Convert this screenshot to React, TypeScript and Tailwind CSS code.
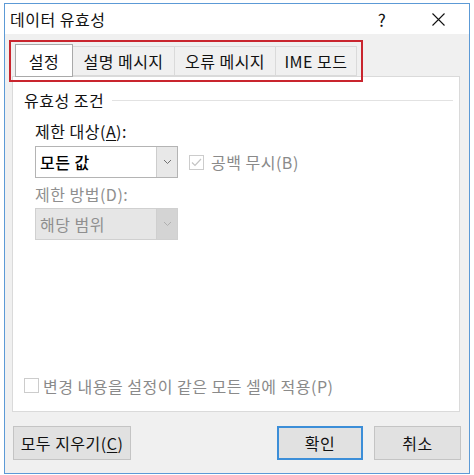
import React from 'react'

const Chevron = ({ color }: { color: string }) => (
  <svg width="9" height="6" viewBox="0 0 9 6" fill="none">
    <path d="M1 1l3.5 3.5L8 1" stroke={color} strokeWidth="1" />
  </svg>
)

const Tab = ({ label, active, width }: { label: string; active?: boolean; width: string }) =>
  active ? (
    <div
      className={`${width} h-[33px] bg-white border border-[#a9a9a9] flex items-center justify-center text-[16px] text-[#111]`}
    >
      {label}
    </div>
  ) : (
    <div
      className={`${width} h-[30px] mt-[2px] bg-[#f0f0f0] border border-[#dadada] border-l-0 flex items-center justify-center text-[16px] text-[#111]`}
    >
      {label}
    </div>
  )

const Select = ({ value, disabled }: { value: string; disabled?: boolean }) => (
  <div
    className={`w-[143px] h-[32px] flex border ${
      disabled ? 'border-[#d0d0d0] bg-[#e6e6e6]' : 'border-[#b4b4b4] bg-white'
    }`}
  >
    <div
      className={`flex-1 flex items-center pl-[4px] text-[16px] ${
        disabled ? 'text-[#8f8f8f]' : 'text-black font-medium'
      }`}
    >
      {value}
    </div>
    <div
      className={`w-[21px] flex items-center justify-center border-l ${
        disabled ? 'bg-[#d4d4d4] border-[#cfcfcf]' : 'bg-[#e8e8e8] border-[#cdcdcd]'
      }`}
    >
      <Chevron color={disabled ? '#b0b0b0' : '#707070'} />
    </div>
  </div>
)

const Button = ({ children, width, primary }: { children: React.ReactNode; width: string; primary?: boolean }) => (
  <div
    className={`${width} h-[34px] bg-[#e1e1e1] flex items-center justify-center text-[16px] text-[#111] ${
      primary ? 'border-2 border-[#3c8ed8]' : 'border border-[#c4c4c4]'
    }`}
  >
    {children}
  </div>
)

export default function App() {
  return (
    <div className="w-[474px] h-[475px] bg-white pt-[3px] pl-[4px] font-['Noto_Sans_CJK_KR','Noto_Sans',sans-serif] leading-none tracking-[0.5px]">
      <div className="w-[466px] h-[471px] border border-[#5c9ad6] bg-[#f0f0f0] flex flex-col">
        {/* title bar */}
        <div className="h-[30px] bg-white flex items-center pl-[5px] shrink-0">
          <span className="text-[16px] text-[#111]">데이터 유효성</span>
          <div className="flex-1" />
          <div className="w-[30px] flex justify-center text-[17px] text-[#111]">?</div>
          <div className="w-[26px]" />
          <div className="w-[30px] flex justify-center">
            <svg width="13" height="13" viewBox="0 0 13 13">
              <path d="M0.5 0.5l12 12M12.5 0.5l-12 12" stroke="#111" strokeWidth="1.1" />
            </svg>
          </div>
          <div className="w-[16px]" />
        </div>

        {/* tabs, marked with a red box */}
        <div className="mt-[6px] ml-[4px] w-[354px] h-[42px] border-2 border-[#c9252e] relative z-10 flex items-start pl-[4px] pt-[2px] shrink-0">
          <Tab label="설정" active width="w-[58px]" />
          <Tab label="설명 메시지" width="w-[102px]" />
          <Tab label="오류 메시지" width="w-[101px]" />
          <Tab label="IME 모드" width="w-[81px]" />
        </div>

        {/* tab panel */}
        <div className="ml-[7px] -mt-[6px] w-[448px] h-[336px] bg-white border border-[#dadada] flex flex-col pl-[11px] pt-[13px] pb-[18px] shrink-0">
          <div className="h-[20px] flex items-center">
            <span className="text-[16px] text-[#111]">유효성 조건</span>
            <div className="flex-1 ml-[8px] mr-[6px] h-px bg-[#e2e2e2]" />
          </div>

          <div className="ml-[11px] flex flex-col">
            <div className="mt-[11px] h-[20px] flex items-center text-[16px] text-[#111]">
              제한 대상(<span className="underline underline-offset-2">A</span>):
            </div>
            <div className="mt-[5px] flex items-center">
              <Select value="모든 값" />
              <div className="ml-[11px] w-[15px] h-[15px] border border-[#cccccc] bg-white flex items-center justify-center">
                <svg width="11" height="9" viewBox="0 0 11 9" fill="none">
                  <path d="M1 4.5l3 3L10 1" stroke="#c4c4c4" strokeWidth="1.2" />
                </svg>
              </div>
              <span className="ml-[7px] text-[16px] text-[#8a8a8a]">공백 무시(B)</span>
            </div>
            <div className="mt-[6px] h-[20px] flex items-center text-[16px] text-[#8f8f8f]">제한 방법(D):</div>
            <div className="mt-[4px]">
              <Select value="해당 범위" disabled />
            </div>
          </div>

          <div className="mt-auto h-[15px] flex items-center">
            <div className="w-[15px] h-[15px] border border-[#cccccc] bg-white" />
            <span className="ml-[4px] text-[16px] text-[#8a8a8a]">변경 내용을 설정이 같은 모든 셀에 적용(P)</span>
          </div>
        </div>

        {/* buttons */}
        <div className="mt-[14px] flex pl-[8px]">
          <Button width="w-[118px]">
            모두 지우기(<span className="underline underline-offset-2">C</span>)
          </Button>
          <div className="flex-1" />
          <Button width="w-[86px]" primary>
            확인
          </Button>
          <div className="w-[11px]" />
          <Button width="w-[87px]">취소</Button>
          <div className="w-[8px]" />
        </div>
      </div>
    </div>
  )
}
